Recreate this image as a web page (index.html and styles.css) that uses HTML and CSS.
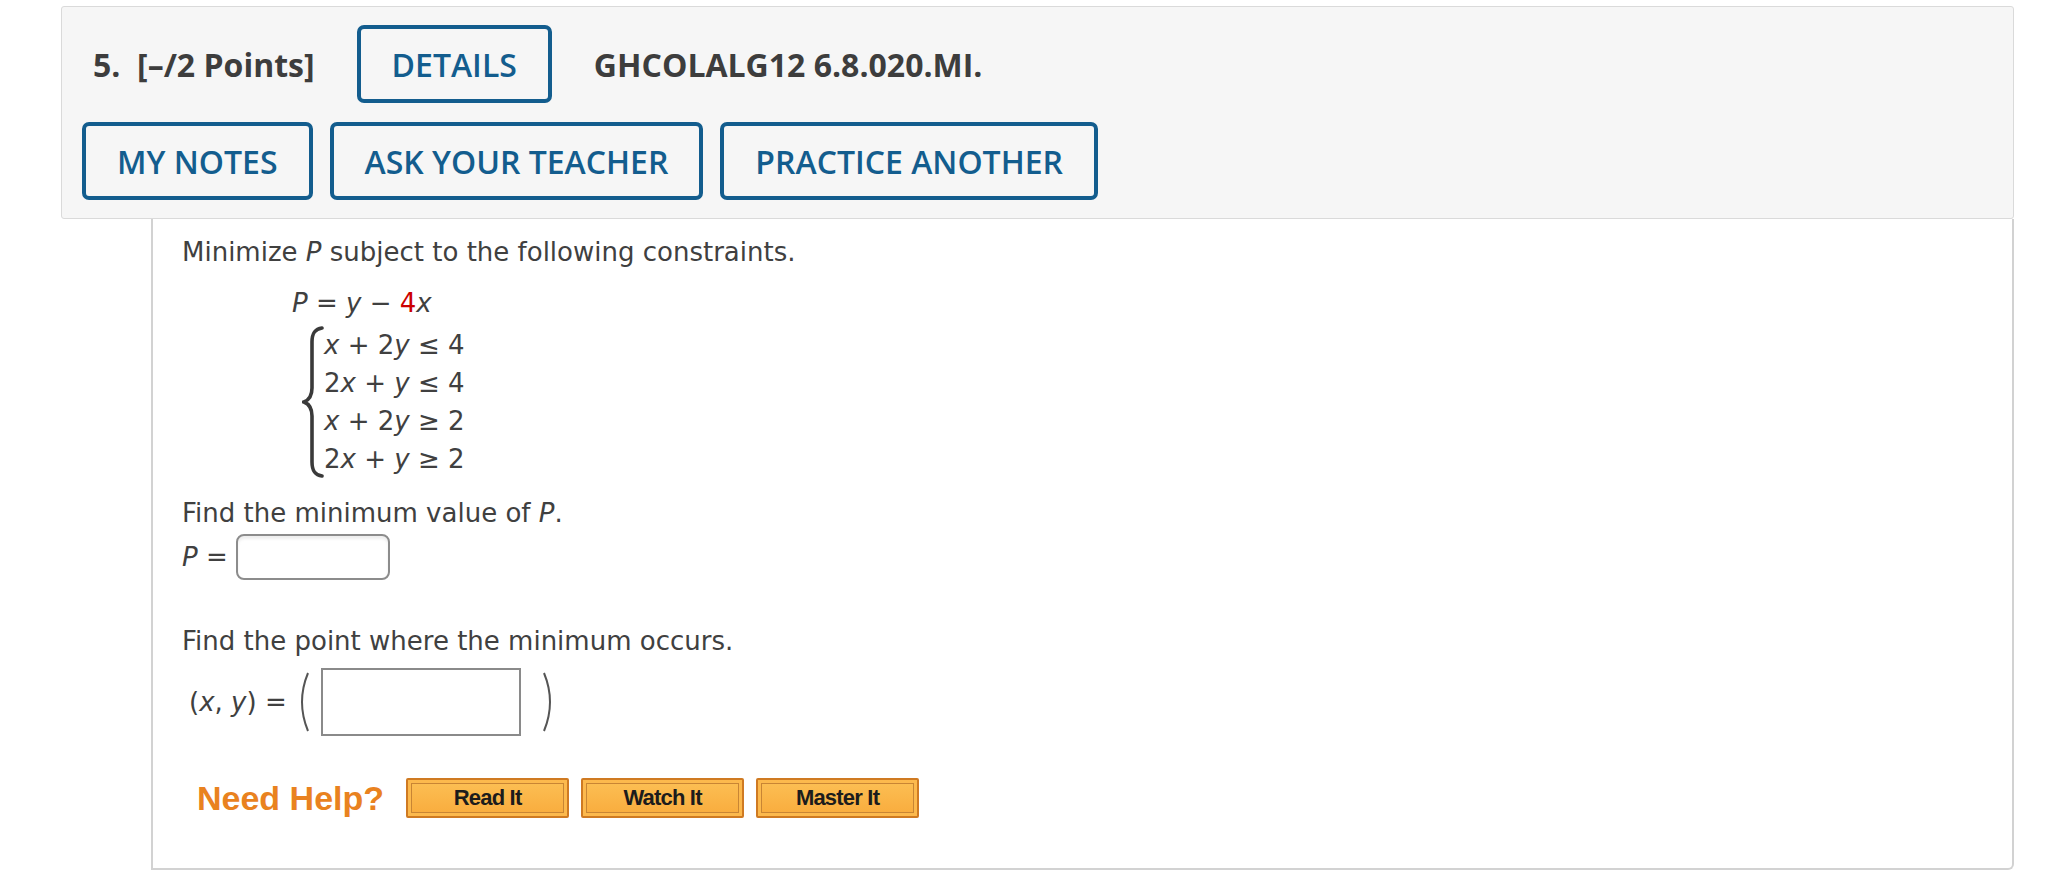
FILE: index.html
```html
<!DOCTYPE html>
<html>
<head>
<meta charset="utf-8">
<link rel="stylesheet" href="styles.css">
</head>
<body>
<div class="page">
  <div class="qhead">
    <div class="qrow1">
      <span class="qnum">5.&nbsp; [–/2 Points]</span>
      <button class="btn">DETAILS</button>
      <span class="qid">GHCOLALG12 6.8.020.MI.</span>
    </div>
    <div class="qrow2">
      <button class="btn">MY NOTES</button>
      <button class="btn">ASK YOUR TEACHER</button>
      <button class="btn">PRACTICE ANOTHER</button>
    </div>
  </div>
  <div class="qbody">
    <p class="line intro">Minimize <i>P</i> subject to the following constraints.</p>
    <p class="line objective"><i>P</i> = <i>y</i> − <span class="red">4</span><i>x</i></p>
    <div class="system">
      <svg class="brace" width="22" height="152" viewBox="0 0 22 152">
        <path d="M20 2 C13 3 10 7 10 16 L10 62 C10 70 7 74 2 76 C7 78 10 82 10 90 L10 136 C10 145 13 149 20 150" fill="none" stroke="#3a3a3a" stroke-width="3.6" stroke-linecap="round"/>
      </svg>
      <div class="rows">
        <div class="line"><i>x</i> + 2<i>y</i> ≤ 4</div>
        <div class="line">2<i>x</i> + <i>y</i> ≤ 4</div>
        <div class="line"><i>x</i> + 2<i>y</i> ≥ 2</div>
        <div class="line">2<i>x</i> + <i>y</i> ≥ 2</div>
      </div>
    </div>
    <p class="line q1">Find the minimum value of <i>P</i>.</p>
    <div class="ans1">
      <span class="lbl"><i>P</i> =</span>
      <span class="inbox round"></span>
    </div>
    <p class="line q2">Find the point where the minimum occurs.</p>
    <div class="ans2">
      <span class="lbl">(<i>x</i>, <i>y</i>) =</span>
      <svg class="paren" width="16" height="62" viewBox="0 0 16 62"><path d="M13 2 Q1 31 13 60" fill="none" stroke="#555" stroke-width="2"/></svg>
      <span class="inbox square"></span>
      <svg class="paren right" width="16" height="62" viewBox="0 0 16 62"><path d="M3 2 Q15 31 3 60" fill="none" stroke="#555" stroke-width="2"/></svg>
    </div>
    <div class="help">
      <span class="needhelp">Need Help?</span>
      <button class="hbtn">Read It</button>
      <button class="hbtn">Watch It</button>
      <button class="hbtn">Master It</button>
    </div>
  </div>
</div>
</body>
</html>
```
FILE: styles.css
```css
html, body {
  margin: 0;
  padding: 0;
  background: #ffffff;
}
.page {
  padding: 6px 0 0 61px;
  width: 1953px;
}
.qhead {
  background: #f6f6f6;
  border: 1px solid #dadada;
  border-radius: 3px;
  padding: 18px 0 18px 20px;
  display: flex;
  flex-direction: column;
  gap: 19px;
  font-family: "Open Sans", sans-serif;
}
.qrow1 {
  display: flex;
  align-items: center;
  gap: 42px;
  padding-left: 11px;
}
.qrow2 {
  display: flex;
  align-items: center;
  gap: 17px;
}
.qnum, .qid {
  font-size: 32px;
  font-weight: 700;
  color: #3d3d3d;
  white-space: pre;
}
.btn {
  box-sizing: border-box;
  height: 78px;
  padding: 0 31px;
  border: 4px solid #135d8e;
  border-radius: 7px;
  background: transparent;
  color: #135d8e;
  font-family: "Open Sans", sans-serif;
  font-size: 32px;
  font-weight: 600;
}
.qbody {
  margin-left: 90px;
  height: 651px;
  box-sizing: border-box;
  border: 2px solid #d2d2d2;
  border-top: none;
  border-radius: 0 0 6px 0;
  padding: 14px 0 0 29px;
  font-family: "DejaVu Sans", Verdana, sans-serif;
  font-size: 26px;
  color: #404040;
}
.line {
  margin: 0;
  line-height: 38px;
  height: 38px;
  white-space: pre;
}
.red { color: #cc0000; }
.objective {
  margin-top: 13px;
  margin-left: 110px;
}
.system {
  display: flex;
  align-items: center;
  margin-top: 4px;
  margin-left: 120px;
}
.brace { display: block; }
.q1 { margin-top: 16px; }
.ans1 {
  display: flex;
  align-items: center;
  margin-top: 2px;
  gap: 8px;
}
.inbox {
  display: block;
  box-sizing: border-box;
  background: #fff;
}
.round {
  width: 154px;
  height: 46px;
  border: 2px solid #8c8c8c;
  border-radius: 8px;
  box-shadow: inset 0 3px 3px rgba(0,0,0,0.07);
}
.q2 { margin-top: 42px; }
.ans2 {
  display: flex;
  align-items: center;
  margin-top: 8px;
  padding-left: 7px;
}
.ans2 .lbl { margin-right: 8px; }
.paren { display: block; }
.ans2 .square {
  width: 200px;
  height: 68px;
  border: 2px solid #8a8a8a;
  margin-left: 10px;
}
.paren.right { margin-left: 20px; }
.help {
  display: flex;
  align-items: center;
  margin-top: 42px;
  padding-left: 15px;
  gap: 12px;
}
.needhelp {
  font-family: "Liberation Sans", Arial, sans-serif;
  font-weight: 700;
  font-size: 34px;
  color: #e9821f;
  margin-right: 10px;
}
.hbtn {
  box-sizing: border-box;
  width: 163px;
  height: 40px;
  border: 2px solid #cf7a22;
  border-radius: 2px;
  background: linear-gradient(#fcc055, #f9ab3c);
  box-shadow: inset 0 0 0 3px #fcb94d, inset 0 0 0 4px #c88534;
  font-family: "Liberation Sans", Arial, sans-serif;
  font-weight: 700;
  font-size: 22px;
  letter-spacing: -0.8px;
  color: #1c1c1c;
  padding: 0;
}
```
